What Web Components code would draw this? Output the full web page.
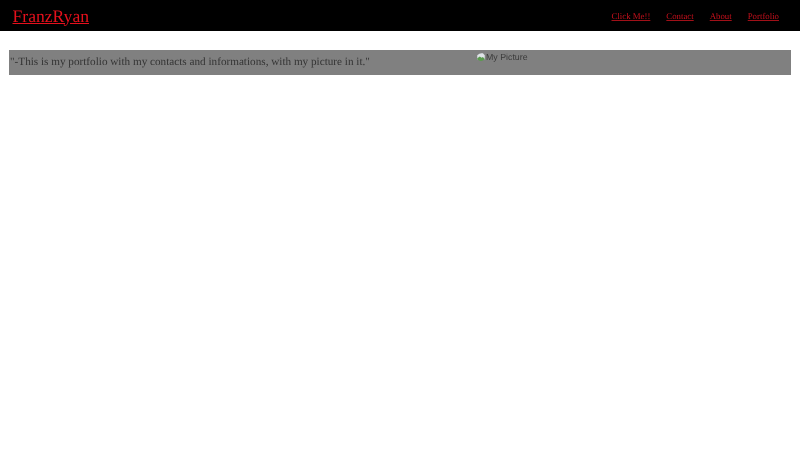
<!DOCTYPE html>
<html>
<head>
<meta charset="utf-8">
<title>FranzRyan</title>
<style>
html { background: #fff; }
body { margin: 0; padding: 0; font-family: "Liberation Serif", serif; text-rendering: geometricPrecision; filter: blur(.5px); min-height: 450px; }
</style>
</head>
<body>
<site-header>
	<a slot="brand" href="#">FranzRyan</a>
	<a slot="links" href="#">Click Me!!</a>
	<a slot="links" href="#">Contact</a>
	<a slot="links" href="#">About</a>
	<a slot="links" href="#">Portfolio</a>
</site-header>
<intro-band>
	"-This is my portfolio with my contacts and informations, with my picture in it."
	<broken-picture slot="picture" alt="My Picture"></broken-picture>
</intro-band>

<template id="header-tpl">
	<style>
	:host { display: flex; align-items: center; justify-content: space-between; height: 31px; background: #000; padding: 1px 21px 0 12.5px; box-sizing: border-box; }
	::slotted(a) { color: #e6101c; }
	::slotted(a[slot="brand"]) { font-size: 17.6px; }
	::slotted(a[slot="links"]) { font-size: 8.8px; color: #c8101c; text-decoration-color: #a01018; }
	nav { display: flex; gap: 16px; }
	</style>
	<slot name="brand"></slot>
	<nav><slot name="links"></slot></nav>
</template>

<template id="band-tpl">
	<style>
	:host { display: grid; grid-template-columns: 467px 1fr; height: 25px; margin: 19px 9px 0; background: #808080; color: #333; font-size: 11.2px; line-height: 24px; }
	.text { padding-left: 1px; white-space: nowrap; }
	</style>
	<div class="text"><slot></slot></div>
	<div><slot name="picture"></slot></div>
</template>

<template id="picture-tpl">
	<style>
	:host { display: flex; height: 14px; color: #3a3a3a; font: 8.8px "Liberation Sans", sans-serif; line-height: 14px; }
	svg { width: 10px; height: 10px; margin-top: 2px; }
	</style>
	<svg viewBox="0 0 16 16">
		<path d="M2 5q4-4 9-3l3 3v7H2z" fill="#dfe3e8"/>
		<path d="M2 10l4-3 3 2 2-1 3 3v1q-4 3-8 2l-4-2z" fill="#5a9a4e"/>
	</svg>
	<span></span>
</template>

<script>
class SiteHeader extends HTMLElement {
	connectedCallback() {
		const shadow = this.attachShadow({ mode: 'open' });
		shadow.appendChild(document.getElementById('header-tpl').content.cloneNode(true));
	}
}
class IntroBand extends HTMLElement {
	connectedCallback() {
		const shadow = this.attachShadow({ mode: 'open' });
		shadow.appendChild(document.getElementById('band-tpl').content.cloneNode(true));
	}
}
class BrokenPicture extends HTMLElement {
	connectedCallback() {
		const shadow = this.attachShadow({ mode: 'open' });
		shadow.appendChild(document.getElementById('picture-tpl').content.cloneNode(true));
		shadow.querySelector('span').textContent = this.getAttribute('alt');
	}
}
customElements.define('site-header', SiteHeader);
customElements.define('intro-band', IntroBand);
customElements.define('broken-picture', BrokenPicture);
</script>
</body>
</html>
